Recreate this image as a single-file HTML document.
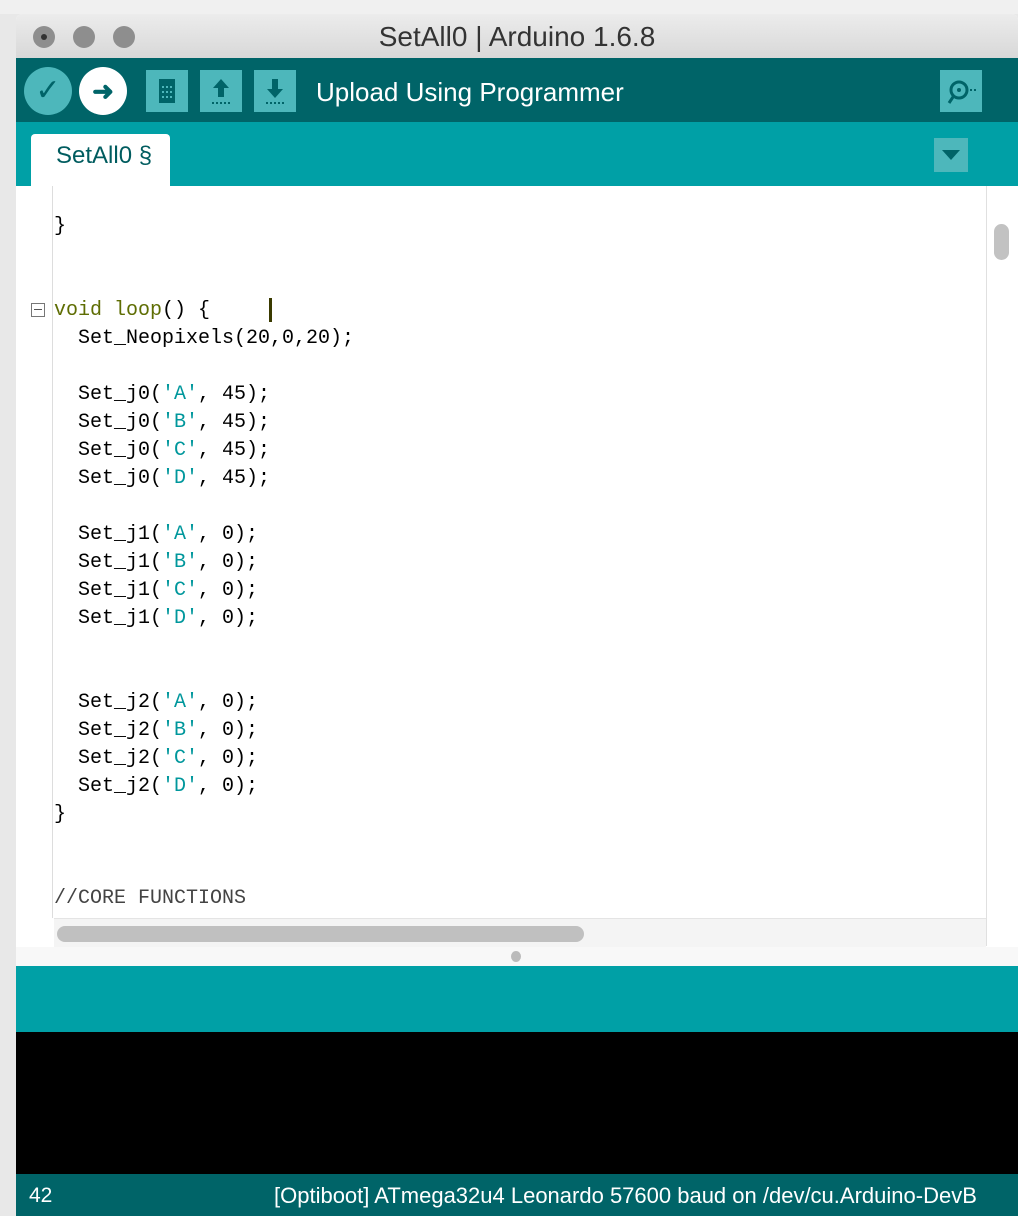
<!DOCTYPE html><html><head><style>
body{margin:0;width:1018px;height:1216px;background:#e8e8e8;position:relative;overflow:hidden;font-family:"Liberation Sans",sans-serif}
.abs{position:absolute}
.code{position:absolute;left:54px;font-family:"Liberation Mono",monospace;font-size:20px;color:#000;white-space:pre;line-height:28px}
.s{color:#00979c}.k{color:#5e6d03}.f{color:#d35400}
.btn{position:absolute;top:70px;width:42px;height:42px;background:#4db7bb}
</style></head><body>
<div class="abs" style="left:0;top:0;width:1018px;height:14px;background:#f0f0f0"></div>
<div class="abs" style="left:16px;top:14px;width:1002px;height:1202px;background:#fff;border-radius:6px 6px 0 0;overflow:hidden">
 <div class="abs" style="left:0;top:0;width:1002px;height:44px;background:linear-gradient(#ececec,#d8d8d8)"></div>
 <div class="abs" style="left:17px;top:12px;width:22px;height:22px;border-radius:50%;background:#8e8e8e"></div>
 <div class="abs" style="left:25px;top:20px;width:6px;height:6px;border-radius:50%;background:#333"></div>
 <div class="abs" style="left:57px;top:12px;width:22px;height:22px;border-radius:50%;background:#8e8e8e"></div>
 <div class="abs" style="left:97px;top:12px;width:22px;height:22px;border-radius:50%;background:#8e8e8e"></div>
 <div class="abs" style="left:0;top:7px;width:1002px;text-align:center;font-size:28px;color:#333">SetAll0 | Arduino 1.6.8</div>
 <div class="abs" style="left:0;top:44px;width:1002px;height:64px;background:#006468"></div>
 <div class="abs" style="left:0;top:108px;width:1002px;height:64px;background:#00a0a6"></div>
</div>
<div class="abs" style="left:24px;top:67px;width:48px;height:48px;border-radius:50%;background:#4db7bb;color:#006468;font-size:30px;text-align:center;line-height:48px">✓</div>
<div class="abs" style="left:79px;top:67px;width:48px;height:48px;border-radius:50%;background:#fff;color:#006468;font-size:26px;text-align:center;line-height:48px;font-weight:bold">➜</div>
<div class="btn" style="left:146px"><svg width="42" height="42"><rect x="13" y="9" width="16" height="24" fill="#006468"/><g fill="#4db7bb"><rect x="16" y="16" width="2" height="2"/><rect x="20" y="16" width="2" height="2"/><rect x="24" y="16" width="2" height="2"/><rect x="16" y="21" width="2" height="2"/><rect x="20" y="21" width="2" height="2"/><rect x="24" y="21" width="2" height="2"/><rect x="16" y="26" width="2" height="2"/><rect x="20" y="26" width="2" height="2"/><rect x="24" y="26" width="2" height="2"/></g></svg></div>
<div class="btn" style="left:200px"><svg width="42" height="42"><path d="M21 9 L29 18 H24 V27 H18 V18 H13Z" fill="#006468"/><path d="M12 33 H30" stroke="#006468" stroke-width="2" stroke-dasharray="2 2"/></svg></div>
<div class="btn" style="left:254px"><svg width="42" height="42"><path d="M21 28 L29 19 H24 V9 H18 V19 H13Z" fill="#006468"/><path d="M12 33 H30" stroke="#006468" stroke-width="2" stroke-dasharray="2 2"/></svg></div>
<div class="abs" style="left:316px;top:77px;font-size:26px;color:#fff">Upload Using Programmer</div>
<div class="btn" style="left:940px"><svg width="42" height="42"><circle cx="19" cy="20" r="8" fill="none" stroke="#006468" stroke-width="3"/><path d="M13 27 L9 33" stroke="#006468" stroke-width="3"/><circle cx="19" cy="20" r="2" fill="#006468"/><path d="M30 20h6" stroke="#006468" stroke-width="2" stroke-dasharray="2 2"/></svg></div>
<div class="abs" style="left:31px;top:134px;width:139px;height:52px;background:#fff;border-radius:4px 4px 0 0"></div>
<div class="abs" style="left:56px;top:142px;font-size:24px;color:#005c5f">SetAll0 §</div>
<div class="abs" style="left:934px;top:138px;width:34px;height:34px;background:#4db7bb"></div>
<div class="abs" style="left:942px;top:150px;width:0;height:0;border-left:9px solid transparent;border-right:9px solid transparent;border-top:10px solid #006468"></div>
<div class="abs" style="left:52px;top:186px;width:1px;height:732px;background:#ddd"></div>
<div class="abs" style="left:986px;top:186px;width:1px;height:760px;background:#e0e0e0"></div>
<div class="abs" style="left:994px;top:224px;width:15px;height:36px;border-radius:8px;background:#c2c2c2"></div>
<div class="abs" style="left:31px;top:303px;width:14px;height:14px;border:1px solid #777;box-sizing:border-box"></div>
<div class="abs" style="left:34px;top:309px;width:8px;height:1px;background:#555"></div>
<div class="abs" style="left:269px;top:298px;width:3px;height:24px;background:#3a3a00"></div>
<div class="code" style="top:213px">}


<span class="k">void</span> <span class="k">loop</span>() {
  Set_Neopixels(20,0,20);

  Set_j0(<span class="s">'A'</span>, 45);
  Set_j0(<span class="s">'B'</span>, 45);
  Set_j0(<span class="s">'C'</span>, 45);
  Set_j0(<span class="s">'D'</span>, 45);

  Set_j1(<span class="s">'A'</span>, 0);
  Set_j1(<span class="s">'B'</span>, 0);
  Set_j1(<span class="s">'C'</span>, 0);
  Set_j1(<span class="s">'D'</span>, 0);


  Set_j2(<span class="s">'A'</span>, 0);
  Set_j2(<span class="s">'B'</span>, 0);
  Set_j2(<span class="s">'C'</span>, 0);
  Set_j2(<span class="s">'D'</span>, 0);
}


<span style="color:#444">//CORE FUNCTIONS</span></div>
<div class="abs" style="left:54px;top:918px;width:932px;height:28px;background:#f4f4f4;border-top:1px solid #e4e4e4"></div>
<div class="abs" style="left:57px;top:926px;width:527px;height:16px;border-radius:8px;background:#c0c0c0"></div>
<div class="abs" style="left:16px;top:947px;width:1002px;height:19px;background:#f8f8f8"></div>
<div class="abs" style="left:511px;top:951px;width:10px;height:11px;border-radius:50%;background:#bbb"></div>
<div class="abs" style="left:16px;top:966px;width:1002px;height:66px;background:#00a0a6"></div>
<div class="abs" style="left:16px;top:1032px;width:1002px;height:142px;background:#000"></div>
<div class="abs" style="left:16px;top:1174px;width:1002px;height:42px;background:#006468"></div>
<div class="abs" style="left:29px;top:1184px;font-size:21px;color:#fff">42</div>
<div class="abs" style="left:274px;top:1183px;font-size:22px;color:#fff">[Optiboot] ATmega32u4 Leonardo 57600 baud on /dev/cu.Arduino-DevB</div>
</body></html>
